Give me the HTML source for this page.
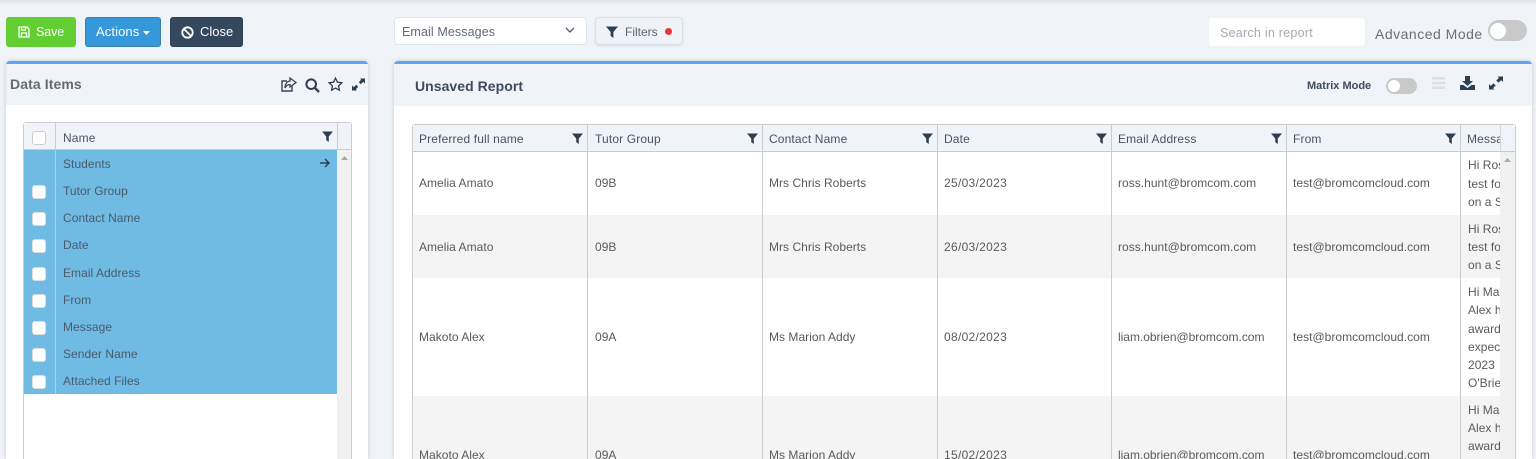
<!DOCTYPE html>
<html style="overflow:hidden;height:459px"><head><meta charset="utf-8">
<style>
html,body{margin:0;padding:0}
body{width:1536px;height:459px;overflow:hidden;position:relative;background:#f0f3f8;font-family:"Liberation Sans",sans-serif;font-size:12px;color:#555;filter:blur(.3px)}
div,svg{position:absolute}
.t{position:absolute;white-space:nowrap;line-height:16px;letter-spacing:.2px}
.btn{border-radius:3px;height:30px;top:17px;box-sizing:border-box}
.w{color:#fff;font-size:13px;letter-spacing:.1px}
.v{background:#c9ccd1;width:1px}
.cb{position:absolute;left:32px;width:14px;height:14px;box-sizing:border-box;background:#fff;border-radius:3px;border:1px solid #ddd}
.t.h{color:#4a5263;font-size:12px;letter-spacing:.14px}
.t.n{color:#4b5a6b;letter-spacing:.05px}
.t.c{color:#5a5a5a;letter-spacing:.03px}
.t.d{letter-spacing:.3px}
.t.l{letter-spacing:-.02px}
</style></head><body>
<svg width="0" height="0" style="position:absolute"><defs>
<symbol id="f" viewBox="0 0 12 12"><path d="M0 .5h12L7.400 6V12L4.600 10V6z" fill="#2f3f52"/></symbol>
<symbol id="e" viewBox="0 0 14 14"><path d="M8.500 .5H14V6l-1.900-1.900-2.600 2.600-2.200-2.200 2.600-2.600zM5.500 13.500H0V8l1.900 1.900 2.600-2.600 2.200 2.200-2.600 2.600z" fill="#2f3f52"/></symbol>
</defs></svg>
<div style="left:0;top:0;width:1536px;height:6px;background:linear-gradient(#e4e5e9,#f0f3f8)"></div>

<!-- buttons -->
<div class="btn" style="left:6px;width:70px;background:#62ce31"></div>
<svg style="left:18px;top:26px" width="12" height="12" viewBox="0 0 12 12"><path d="M1 1h8l2 2v8H1z M3.500 1v3h4V1 M3.500 11V7h5v4" fill="none" stroke="#fff" stroke-width="1.300"/></svg>
<span class="t w" style="left:36px;top:24px;font-size:12.500px;letter-spacing:-.1px">Save</span>
<div class="btn" style="left:85px;width:76px;background:#3498db;border:1px solid #3c7fa8"></div>
<span class="t w" style="left:96px;top:24px">Actions</span>
<svg style="left:143px;top:31px" width="7" height="4"><path d="M0 0h7L3.500 4z" fill="#fff"/></svg>
<div class="btn" style="left:170px;width:73px;background:#34495e;border:1px solid #2c3e50"></div>
<svg style="left:181px;top:26px" width="13" height="13" viewBox="0 0 13 13"><circle cx="6.500" cy="6.500" r="5.200" fill="none" stroke="#fff" stroke-width="1.800"/><path d="M3 3l7 7" stroke="#fff" stroke-width="1.800"/></svg>
<span class="t w" style="left:200px;top:24px;letter-spacing:0">Close</span>

<!-- select -->
<div style="left:394px;top:17px;width:193px;height:28px;box-sizing:border-box;background:#fff;border:1px solid #dfe5ee;border-radius:4px"></div>
<span class="t" style="left:402px;top:24px;font-size:12.500px;color:#667;letter-spacing:.1px">Email Messages</span>
<svg style="left:565px;top:27px" width="10" height="7"><path d="M1 1l4 4 4-4" fill="none" stroke="#556" stroke-width="1.300"/></svg>
<div style="left:595px;top:17px;width:88px;height:28px;box-sizing:border-box;background:#eff2f7;border:1px solid #d9e1ec;border-radius:4px;box-shadow:0 1px 2px rgba(0,0,0,.08)"></div>
<svg style="left:606px;top:26px" width="12" height="12"><use href="#f"/></svg>
<span class="t" style="left:625px;top:24px;color:#5a6472;letter-spacing:0">Filters</span>
<div style="left:665px;top:28px;width:7px;height:7px;border-radius:50%;background:#ee3333"></div>

<!-- search/adv -->
<div style="left:1209px;top:18px;width:156px;height:28px;background:#fff;border-radius:3px"></div>
<span class="t" style="left:1220px;top:25px;color:#a6a9ad;font-size:12.500px;letter-spacing:.25px">Search in report</span>
<span class="t" style="left:1375px;top:26px;color:#6b7078;font-size:14px;letter-spacing:.5px">Advanced Mode</span>
<div style="left:1488px;top:20px;width:39px;height:21px;border-radius:11px;background:#c9c9c9"></div>
<div style="left:1490px;top:23px;width:16px;height:16px;border-radius:50%;background:#fff"></div>

<!-- left panel -->
<div style="left:6px;top:61px;width:362px;height:398px;background:#fff;border-radius:4px 4px 0 0;box-shadow:0 0 4px rgba(0,0,0,.18);overflow:hidden">
  <div style="left:0;top:0;width:362px;height:44px;background:#f0f3f8"></div>
  <div style="left:0;top:0;width:362px;height:3px;background:#5fa3f5"></div>
</div>
<span class="t" style="left:10px;top:76px;font-size:14px;font-weight:bold;color:#666b73;letter-spacing:.1px">Data Items</span>
<svg style="left:280px;top:77px" width="17" height="16" viewBox="0 0 17 16"><path d="M12 9v5H2V4h5" fill="none" stroke="#3a4656" stroke-width="1.400"/><path d="M10 1l6 4.500L10 10V7.500C7.500 7.500 6 9 5 11c0-4 2-6.500 5-7z" fill="none" stroke="#3a4656" stroke-width="1.300"/></svg>
<svg style="left:305px;top:78px" width="15" height="15" viewBox="0 0 15 15"><circle cx="6.200" cy="6.200" r="4.800" fill="none" stroke="#2f3f52" stroke-width="2"/><path d="M9.500 9.500l4.500 4.500" stroke="#2f3f52" stroke-width="2.400"/></svg>
<svg style="left:328px;top:77px" width="15" height="15" viewBox="0 0 15 15"><path d="M7.500 1.200l1.900 4 4.400.6-3.200 3 .8 4.400-3.900-2.100-3.900 2.100.8-4.400-3.200-3 4.400-.6z" fill="none" stroke="#2f3f52" stroke-width="1.300"/></svg>
<svg style="left:352px;top:78px" width="13" height="13"><use href="#e"/></svg>

<div style="left:23px;top:122px;width:329px;height:337px;box-sizing:border-box;border:1px solid #ccc;border-bottom:0;border-radius:3px 3px 0 0;background:#fff"></div>
<div style="left:24px;top:123px;width:327px;height:26px;background:#f0f3f8"></div>
<div style="left:24px;top:149px;width:327px;height:1px;background:#ccc"></div>
<div class="v" style="left:55px;top:123px;height:26px"></div>
<div class="v" style="left:337px;top:123px;height:26px"></div>
<div class="cb" style="top:131px;border-color:#ccc"></div>
<span class="t h" style="left:63px;top:130px">Name</span>
<svg style="left:322px;top:131px" width="11" height="11"><use href="#f"/></svg>
<div style="left:24px;top:150px;width:313px;height:244px;background:#70bbe4"></div>
<div style="left:55px;top:150px;width:1px;height:244px;background:#a5d4ed"></div>
<div style="left:337px;top:150px;width:14px;height:309px;background:#f1f1f1"></div>
<svg style="left:341px;top:156px" width="7" height="4"><path d="M0 4h7L3.500 0z" fill="#a9a9a9"/></svg>
<span class="t n" style="left:63px;top:156px">Students</span>
<svg style="left:319px;top:157px" width="12" height="12" viewBox="0 0 12 12"><path d="M1 6h9M6 2l4 4-4 4" fill="none" stroke="#2f4054" stroke-width="1.500"/></svg>
<div class="cb" style="top:185px"></div><span class="t n" style="left:63px;top:183px">Tutor Group</span>
<div class="cb" style="top:212px"></div><span class="t n" style="left:63px;top:210px">Contact Name</span>
<div class="cb" style="top:239px"></div><span class="t n" style="left:63px;top:237px">Date</span>
<div class="cb" style="top:267px"></div><span class="t n" style="left:63px;top:265px">Email Address</span>
<div class="cb" style="top:294px"></div><span class="t n" style="left:63px;top:292px">From</span>
<div class="cb" style="top:321px"></div><span class="t n" style="left:63px;top:319px">Message</span>
<div class="cb" style="top:348px"></div><span class="t n" style="left:63px;top:346px">Sender Name</span>
<div class="cb" style="top:375px"></div><span class="t n" style="left:63px;top:373px">Attached Files</span>

<!-- right panel -->
<div style="left:394px;top:61px;width:1138px;height:398px;background:#fff;border-radius:4px 4px 0 0;box-shadow:0 0 4px rgba(0,0,0,.18);overflow:hidden">
  <div style="left:0;top:0;width:1138px;height:45px;background:#f0f3f8"></div>
  <div style="left:0;top:0;width:1138px;height:3px;background:#5fa3f5"></div>
</div>
<span class="t" style="left:415px;top:78px;font-size:14px;font-weight:bold;color:#3f4a5c;letter-spacing:.05px">Unsaved Report</span>
<span class="t" style="left:1307px;top:78px;font-size:11px;font-weight:bold;color:#3f4a5c;letter-spacing:0">Matrix Mode</span>
<div style="left:1386px;top:78px;width:31px;height:16px;border-radius:8px;background:#c9c9c9"></div>
<div style="left:1388px;top:80px;width:12px;height:12px;border-radius:50%;background:#fff"></div>
<svg style="left:1432px;top:77px" width="13" height="12"><path d="M0 0h13v2.500H0zM0 4.800h13v2.500H0zM0 9.500h13V12H0z" fill="#dcdfe3"/></svg>
<svg style="left:1460px;top:76px" width="15" height="14" viewBox="0 0 15 14"><path d="M5 0h5v5h3L7.500 10 2 5h3zM0 9h3.500l4 3 4-3H15v5H0z" fill="#2f3f52"/></svg>
<svg style="left:1489px;top:76px" width="14" height="14"><use href="#e"/></svg>

<div style="left:412px;top:124px;width:1104px;height:335px;box-sizing:border-box;border:1px solid #ccc;border-bottom:0;border-radius:3px 3px 0 0;background:#fff"></div>
<div style="left:413px;top:125px;width:1102px;height:26px;background:#f0f3f8"></div>
<div style="left:413px;top:215px;width:1087px;height:63px;background:#f4f4f4"></div>
<div style="left:413px;top:396px;width:1087px;height:63px;background:#f4f4f4"></div>
<div style="left:413px;top:151px;width:1102px;height:1px;background:#ccc"></div>
<div class="v" style="left:587px;top:125px;height:334px"></div>
<div class="v" style="left:762px;top:125px;height:334px"></div>
<div class="v" style="left:937px;top:125px;height:334px"></div>
<div class="v" style="left:1111px;top:125px;height:334px"></div>
<div class="v" style="left:1286px;top:125px;height:334px"></div>
<div class="v" style="left:1460px;top:125px;height:334px"></div>

<span class="t h" style="left:419px;top:131px">Preferred full name</span>
<span class="t h" style="left:595px;top:131px">Tutor Group</span>
<span class="t h" style="left:769px;top:131px">Contact Name</span>
<span class="t h" style="left:944px;top:131px">Date</span>
<span class="t h" style="left:1118px;top:131px">Email Address</span>
<span class="t h" style="left:1293px;top:131px">From</span>
<svg style="left:572px;top:133px" width="11" height="11"><use href="#f"/></svg>
<svg style="left:747px;top:133px" width="11" height="11"><use href="#f"/></svg>
<svg style="left:922px;top:133px" width="11" height="11"><use href="#f"/></svg>
<svg style="left:1096px;top:133px" width="11" height="11"><use href="#f"/></svg>
<svg style="left:1271px;top:133px" width="11" height="11"><use href="#f"/></svg>
<svg style="left:1445px;top:133px" width="11" height="11"><use href="#f"/></svg>

<span class="t c" style="left:419px;top:175px">Amelia Amato</span><span class="t c" style="left:595px;top:175px">09B</span><span class="t c" style="left:769px;top:175px">Mrs Chris Roberts</span><span class="t c d" style="left:944px;top:175px">25/03/2023</span><span class="t c" style="left:1118px;top:175px">ross.hunt@bromcom.com</span><span class="t c" style="left:1293px;top:175px">test@bromcomcloud.com</span>
<span class="t c" style="left:419px;top:239px">Amelia Amato</span><span class="t c" style="left:595px;top:239px">09B</span><span class="t c" style="left:769px;top:239px">Mrs Chris Roberts</span><span class="t c d" style="left:944px;top:239px">26/03/2023</span><span class="t c" style="left:1118px;top:239px">ross.hunt@bromcom.com</span><span class="t c" style="left:1293px;top:239px">test@bromcomcloud.com</span>
<span class="t c" style="left:419px;top:329px">Makoto Alex</span><span class="t c" style="left:595px;top:329px">09A</span><span class="t c" style="left:769px;top:329px">Ms Marion Addy</span><span class="t c d" style="left:944px;top:329px">08/02/2023</span><span class="t c l" style="left:1118px;top:329px">liam.obrien@bromcom.com</span><span class="t c" style="left:1293px;top:329px">test@bromcomcloud.com</span>
<span class="t c" style="left:419px;top:447px">Makoto Alex</span><span class="t c" style="left:595px;top:447px">09A</span><span class="t c" style="left:769px;top:447px">Ms Marion Addy</span><span class="t c d" style="left:944px;top:447px">15/02/2023</span><span class="t c l" style="left:1118px;top:447px">liam.obrien@bromcom.com</span><span class="t c" style="left:1293px;top:447px">test@bromcomcloud.com</span>

<div style="left:1461px;top:0;width:39px;height:459px;overflow:hidden">
<span class="t h" style="left:6px;top:131px">Message</span>
<span class="t c" style="left:7px;top:157px">Hi Ross</span><span class="t c" style="left:7px;top:176px">test for</span><span class="t c" style="left:7px;top:194px">on a Sat</span>
<span class="t c" style="left:7px;top:221px">Hi Ross</span><span class="t c" style="left:7px;top:239px">test for</span><span class="t c" style="left:7px;top:257px">on a Sat</span>
<span class="t c" style="left:7px;top:284px">Hi Marion</span><span class="t c" style="left:7px;top:302px">Alex has</span><span class="t c" style="left:7px;top:321px">awarded</span><span class="t c" style="left:7px;top:339px">expected</span><span class="t c" style="left:7px;top:357px">2023</span><span class="t c" style="left:7px;top:375px">O'Brien</span>
<span class="t c" style="left:7px;top:402px">Hi Marion</span><span class="t c" style="left:7px;top:420px">Alex has</span><span class="t c" style="left:7px;top:438px">awarded</span>
</div>

<div style="left:1500px;top:125px;width:15px;height:26px;background:#f0f3f8;border-left:1px solid #d5d7da;box-sizing:border-box"></div>
<div style="left:1500px;top:152px;width:15px;height:307px;background:#f1f1f1"></div>
<svg style="left:1504px;top:158px" width="7" height="4"><path d="M0 4h7L3.500 0z" fill="#a9a9a9"/></svg>
</body></html>
